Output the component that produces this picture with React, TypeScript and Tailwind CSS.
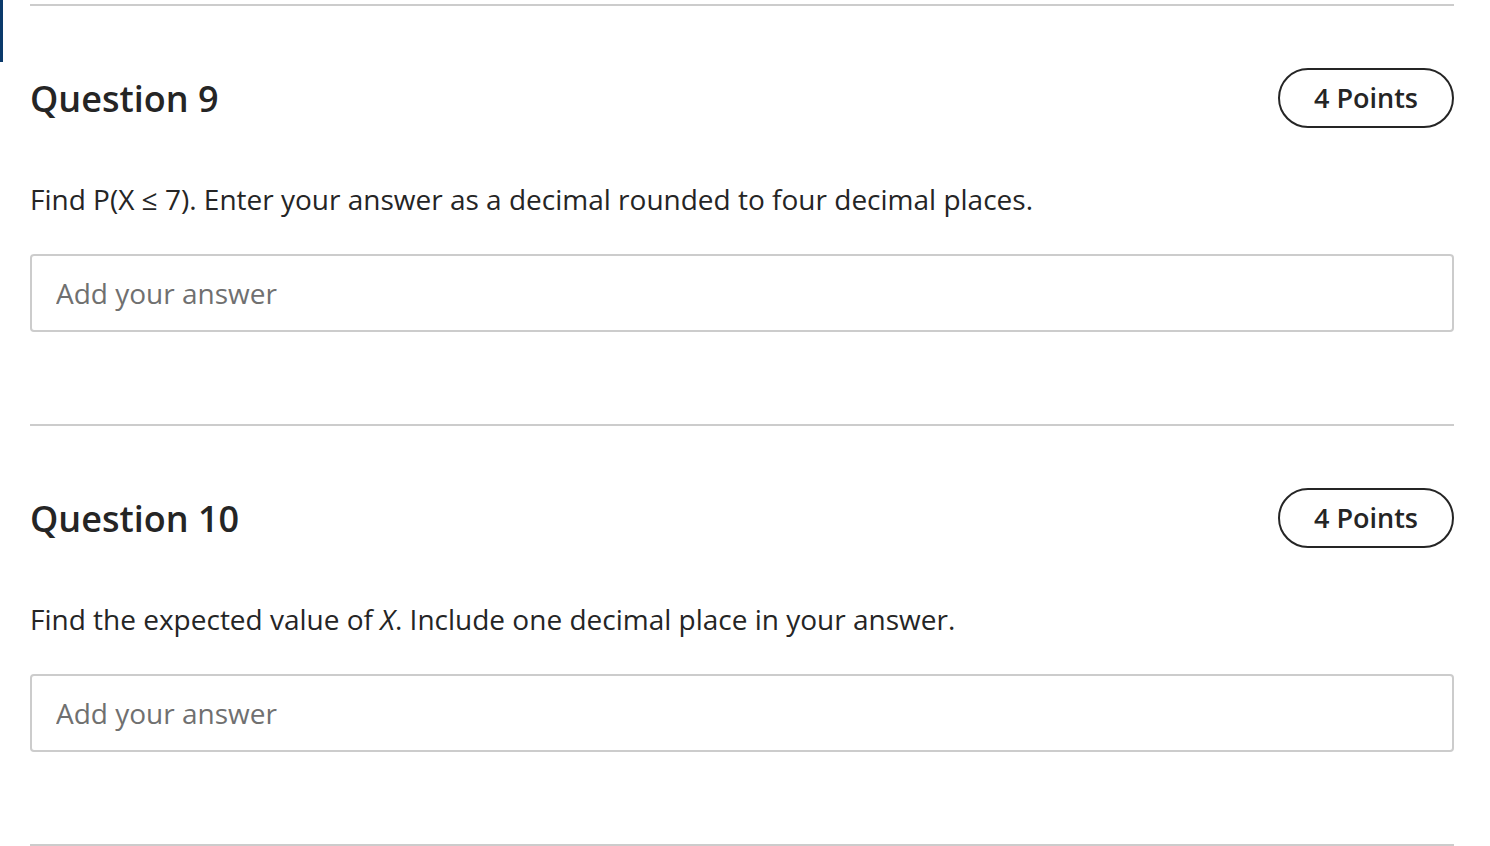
const questions = [
  {
    title: "Question 9",
    points: "4 Points",
    prompt: <>Find P(X ≤ 7). Enter your answer as a decimal rounded to four decimal places.</>,
  },
  {
    title: "Question 10",
    points: "4 Points",
    prompt: (
      <>
        Find the expected value of <i>X</i>. Include one decimal place in your answer.
      </>
    ),
  },
];

export default function App() {
  return (
    <div
      className="relative min-h-[846px] w-[1490px] overflow-hidden bg-white pt-1"
      style={{ fontFamily: '"Open Sans", "Noto Sans", sans-serif' }}
    >
      {/* focus bar on the left edge */}
      <div className="absolute left-0 top-0 h-[62px] w-[3px] bg-[#0b3a6b]" />

      <div className="ml-[30px] mr-[36px] flex flex-col">
        <div className="h-[2px] bg-[#cccccc]" />
        {questions.map((q) => (
          <div key={q.title} className="flex flex-col">
            <div className="mt-[62px] flex h-[60px] items-center justify-between">
              <h2 className="pt-[2px] text-[36px] font-semibold leading-none text-[#252525]">{q.title}</h2>
              <div className="flex h-[60px] w-[176px] items-center justify-center rounded-full border-2 border-[#252525] text-[27px] font-semibold text-[#252525]">
                {q.points}
              </div>
            </div>
            <p className="mt-[51px] text-[28px] leading-[40px] text-[#252525]">{q.prompt}</p>
            <input
              placeholder="Add your answer"
              className="mt-[35px] h-[78px] w-full rounded-[4px] border-2 border-[#cccccc] px-6 text-[28px] text-[#252525] outline-none placeholder:text-[#707070]"
            />
            <div className="mt-[92px] h-[2px] bg-[#cccccc]" />
          </div>
        ))}
      </div>
    </div>
  );
}
